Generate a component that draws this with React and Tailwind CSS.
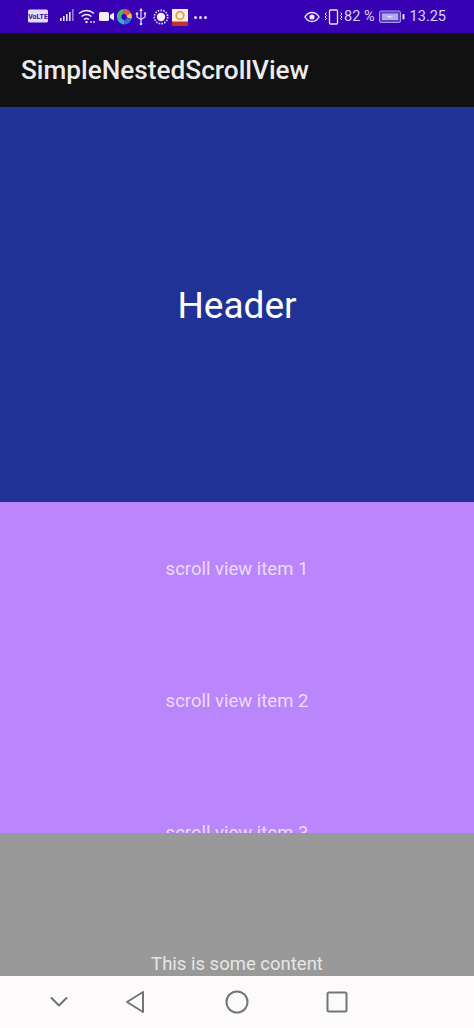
import React from 'react';

const items = ['scroll view item 1', 'scroll view item 2', 'scroll view item 3'];

const LeftStatusIcons = () => (
  <svg width="122" height="20" viewBox="0 0 122 20" className="shrink-0">
    {/* VoLTE badge */}
    <rect x="0" y="2.500" width="20" height="13" rx="1.500" fill="#e4dcf5" />
    <text x="10" y="11.800" textAnchor="middle" fontSize="7" fontWeight="700" fill="#3a0a9e" fontFamily="Roboto, sans-serif">VoLTE</text>
    {/* signal */}
    <g fill="#e8e2f8">
      <rect x="32" y="11" width="1.600" height="3" />
      <rect x="35" y="9" width="1.600" height="5" />
      <rect x="38" y="7" width="1.600" height="7" />
      <rect x="41" y="5" width="1.600" height="9" />
      <rect x="44" y="2" width="1.600" height="12" opacity="0.55" />
    </g>
    {/* wifi */}
    <g fill="none" stroke="#eee9fb" strokeWidth="1.500">
      <path d="M51 6.500c4.500-4 10.500-4 15 0" />
      <path d="M53.500 9.500c3-2.500 7-2.500 10 0" />
      <path d="M56 12.500c1.500-1.200 3.500-1.200 5 0" />
    </g>
    <circle cx="58.500" cy="15" r="1.200" fill="#eee9fb" />
    <circle cx="63" cy="15" r="0.900" fill="#eee9fb" />
    <circle cx="66" cy="15" r="0.900" fill="#eee9fb" />
    {/* video */}
    <rect x="71" y="5" width="10" height="9" rx="1.500" fill="#f2eefc" />
    <path d="M82 8l4-2.500v8L82 11z" fill="#f2eefc" />
    {/* colored ring */}
    <path d="M96 2a7.500 7.500 0 0 1 7 4l-4.500 2.500a3 3 0 0 0-3-1.500z" fill="#e2574c" />
    <path d="M103 6a7.500 7.500 0 0 1 .5 6l-4.500-1.500a3 3 0 0 0-.5-2z" fill="#f2c14e" />
    <path d="M103.500 12a7.500 7.500 0 0 1-7 5.500l-.5-4.500a3 3 0 0 0 3-2.500z" fill="#2e6fd8" />
    <path d="M96.500 17.500a7.500 7.500 0 0 1-7.500-6l4.500-1a3 3 0 0 0 2.500 2.500z" fill="#3fa7d6" />
    <path d="M89 11.500a7.500 7.500 0 0 1 7-9.500l-.5 5a3 3 0 0 0-2 3.500z" fill="#49b675" />
    {/* usb */}
    <g stroke="#e0d8f8" strokeWidth="1.200" fill="none">
      <path d="M113 3v14" />
      <path d="M109 7v3l4 2.500 4-2.500V7" />
    </g>
    <path d="M113 1l1.800 3h-3.600z" fill="#e0d8f8" />
    <circle cx="113" cy="17" r="1.300" fill="#e0d8f8" />
    <rect x="107.800" y="5.500" width="2.400" height="2.400" fill="#e0d8f8" />
    <circle cx="117" cy="6.500" r="1.200" fill="#e0d8f8" />
  </svg>
);

const RightIcons = () => (
  <div className="flex items-center">
    <svg width="16" height="12" viewBox="0 0 16 12">
      <path d="M1 6c3.500-6 10.500-6 14 0-3.500 6-10.500 6-14 0z" fill="none" stroke="#ece7fa" strokeWidth="1.400" />
      <circle cx="8" cy="6" r="2.600" fill="#ece7fa" />
    </svg>
    <svg width="19" height="16" viewBox="0 0 19 16" className="ml-[4px]">
      <rect x="5.500" y="1" width="8" height="14" rx="1" fill="none" stroke="#ece7fa" strokeWidth="1.300" />
      <path d="M2.500 3.500l-1.500 1.500 1.500 1.500-1.500 1.500 1.500 1.500-1.500 1.500M16.500 3.500l1.500 1.500-1.500 1.500 1.500 1.500-1.500 1.500 1.500 1.500" fill="none" stroke="#ece7fa" strokeWidth="1" />
    </svg>
    <span className="ml-[1px] text-[14.500px] text-[#dcd4f5]">82 %</span>
    <svg width="26" height="14" viewBox="0 0 26 14" className="ml-[4px]">
      <rect x="0.500" y="1" width="21" height="11.500" rx="1.500" fill="#5a3fc4" stroke="#a89ae6" />
      <rect x="3" y="3.500" width="16" height="6.500" fill="#b3a8ea" />
      <path d="M7.500 7l4-1.500V6.500h3L10.500 8V7z" fill="#f4f1ff" />
      <rect x="23.500" y="4" width="2" height="5.500" rx="0.800" fill="#ece7fa" />
    </svg>
    <span className="ml-[5px] text-[14.500px] text-[#dcd4f5]">13.25</span>
  </div>
);

const App = () => {
  return (
    <div className="flex flex-col h-[1028px] w-[474px] overflow-hidden font-['Roboto',sans-serif]">
      <div className="h-[33px] bg-[#3700b3] flex items-center justify-between pl-[28px] pr-[28px] pt-[1px]">
        <div className="flex items-center">
          <LeftStatusIcons />
          {/* sun */}
          <svg width="16" height="16" viewBox="0 0 16 16" className="ml-[3px]">
            <circle cx="8" cy="8" r="4.200" fill="#f4f1ff" />
            <circle cx="8" cy="8" r="6.700" fill="none" stroke="#e4dcf5" strokeWidth="1.700" strokeDasharray="1.600 1.200" />
          </svg>
          {/* notification thumb */}
          <svg width="16" height="17" viewBox="0 0 16 17" className="ml-[3px]">
            <rect width="16" height="17" fill="#f6efe6" />
            <circle cx="8" cy="6.500" r="3.800" fill="none" stroke="#e2a13c" strokeWidth="1.800" />
            <rect x="0" y="12.500" width="16" height="4.500" fill="#c9302c" />
          </svg>
          <div className="ml-[6px] flex gap-[2px]">
            <span className="size-[3px] rounded-full bg-[#e8e2f8]" />
            <span className="size-[3px] rounded-full bg-[#e8e2f8]" />
            <span className="size-[3px] rounded-full bg-[#e8e2f8]" />
          </div>
        </div>
        <RightIcons />
      </div>

      <div className="h-[74px] bg-[#111111] flex items-center pl-[21px] pt-[2px]">
        <h1 className="text-[26.200px] font-medium text-[#ececec]">SimpleNestedScrollView</h1>
      </div>

      <div className="h-[395px] bg-[#213297] flex items-center justify-center pt-[3px]">
        <span className="text-[37px] text-white">Header</span>
      </div>

      <div className="h-[331px] bg-[#bb86fc] overflow-hidden">
        {items.map((item) => (
          <div key={item} className="h-[132px] shrink-0 flex items-center justify-center pt-[4px] text-[18.500px] text-[#eadcfb]">
            {item}
          </div>
        ))}
      </div>

      <div className="h-[143px] bg-[#999999] flex items-end justify-center">
        <span className="text-[18.500px] leading-[24px] text-[#e6e6e6]">This is some content</span>
      </div>

      <div className="flex-1 bg-[#fcfafb] flex items-center pb-[1px]">
        <div className="w-[118px] flex justify-center">
          <svg width="18" height="12" viewBox="0 0 18 12">
            <path d="M1.500 2l7.500 7.500L16.500 2" fill="none" stroke="#6f6f6f" strokeWidth="2" strokeLinecap="round" strokeLinejoin="round" />
          </svg>
        </div>
        <div className="w-[34px] flex justify-center">
          <svg width="20" height="24" viewBox="0 0 20 24">
            <path d="M18 2L2 12l16 10z" fill="none" stroke="#757575" strokeWidth="2" strokeLinejoin="round" />
          </svg>
        </div>
        <div className="ml-[73px] w-[24px] flex justify-center">
          <svg width="24" height="24" viewBox="0 0 24 24">
            <circle cx="12" cy="12" r="10.500" fill="none" stroke="#757575" strokeWidth="2" />
          </svg>
        </div>
        <div className="ml-[77px] w-[22px] flex justify-center">
          <svg width="22" height="22" viewBox="0 0 22 22">
            <rect x="1.500" y="1.500" width="19" height="19" rx="1.500" fill="none" stroke="#757575" strokeWidth="2" />
          </svg>
        </div>
      </div>
    </div>
  );
};

export default App;
